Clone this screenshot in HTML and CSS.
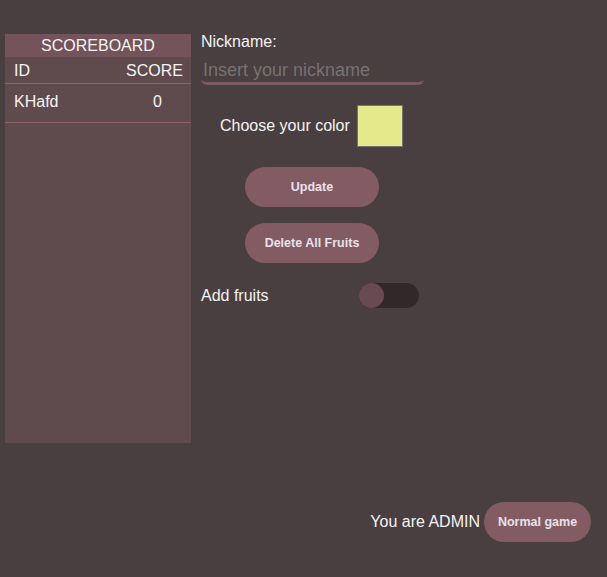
FILE: index.html
```html
<!DOCTYPE html>
<html>
<head>
<meta charset="utf-8">
<link rel="stylesheet" href="styles.css">
</head>
<body>
<div class="page">
  <div class="scoreboard">
    <div class="sb-title">SCOREBOARD</div>
    <div class="sb-row sb-head"><span class="c-id">ID</span><span class="c-score">SCORE</span></div>
    <div class="sb-row sb-item"><span class="c-id">KHafd</span><span class="c-val">0</span></div>
  </div>
  <div class="controls">
    <label class="label">Nickname:</label>
    <div class="input">Insert your nickname</div>
    <div class="color-row">
      <span class="label">Choose your color</span>
      <span class="swatch"></span>
    </div>
    <div class="btn">Update</div>
    <div class="btn">Delete All Fruits</div>
    <div class="toggle-row">
      <span class="label">Add fruits</span>
      <span class="toggle"><span class="knob"></span></span>
    </div>
  </div>
</div>
<div class="footer">
  <span class="label">You are ADMIN</span>
  <div class="btn btn-small">Normal game</div>
</div>
</body>
</html>
```
FILE: styles.css
```css
html, body {
  margin: 0;
  padding: 0;
  background: #493e40;
  height: 100%;
}
body {
  font-family: "Liberation Sans", Arial, sans-serif;
  color: #f4f4f4;
  width: 607px;
  height: 577px;
  position: relative;
  overflow: hidden;
}
.page {
  display: flex;
  padding: 34px 0 0 5px;
  gap: 10px;
}
.scoreboard {
  width: 186px;
  height: 409px;
  background: #5f4a4d;
  font-size: 16px;
}
.sb-title {
  background: #74545a;
  height: 23px;
  line-height: 23px;
  text-align: center;
}
.sb-row {
  display: flex;
  justify-content: space-between;
  border-bottom: 1px solid #8c6369;
}
.sb-head {
  height: 24px;
  padding: 2px 8px 0 9px;
  line-height: 24px;
}
.sb-item {
  height: 38px;
  line-height: 36px;
  padding: 0 29px 0 9px;
}
.controls {
  display: flex;
  flex-direction: column;
  align-items: flex-start;
  width: 223px;
}
.label {
  font-size: 16px;
  line-height: 18px;
}
.controls > .label {
  margin-top: -1px;
}
.input {
  width: 219px;
  height: 24px;
  padding: 4px 2px 0;
  margin-top: 3px;
  font-size: 18px;
  line-height: 24px;
  color: #787272;
  border-bottom: 3px solid #7d5860;
  border-radius: 0 0 6px 6px;
}
.color-row {
  display: flex;
  align-items: center;
  gap: 7px;
  margin: 20px 0 0 19px;
}
.swatch {
  width: 44px;
  height: 40px;
  background: #e6e98b;
  border: 1px solid #747474;
}
.btn {
  width: 134px;
  height: 40px;
  border-radius: 20px;
  background: #825b63;
  color: #e9e2ea;
  font-size: 12.5px;
  font-weight: bold;
  display: flex;
  align-items: center;
  justify-content: center;
  margin-left: 44px;
}
.color-row + .btn { margin-top: 20px; }
.btn + .btn { margin-top: 16px; }
.toggle-row {
  display: flex;
  align-items: center;
  justify-content: space-between;
  width: 218px;
  margin-top: 20px;
}
.toggle {
  width: 60px;
  height: 25px;
  border-radius: 13px;
  background: #322729;
  position: relative;
}
.knob {
  position: absolute;
  left: 0;
  top: 0;
  width: 25px;
  height: 25px;
  border-radius: 50%;
  background: #6a4a52;
}
.footer {
  position: absolute;
  right: 16px;
  top: 502px;
  display: flex;
  align-items: center;
  gap: 4px;
}
.btn-small {
  width: 107px;
  margin-left: 0;
}
```
